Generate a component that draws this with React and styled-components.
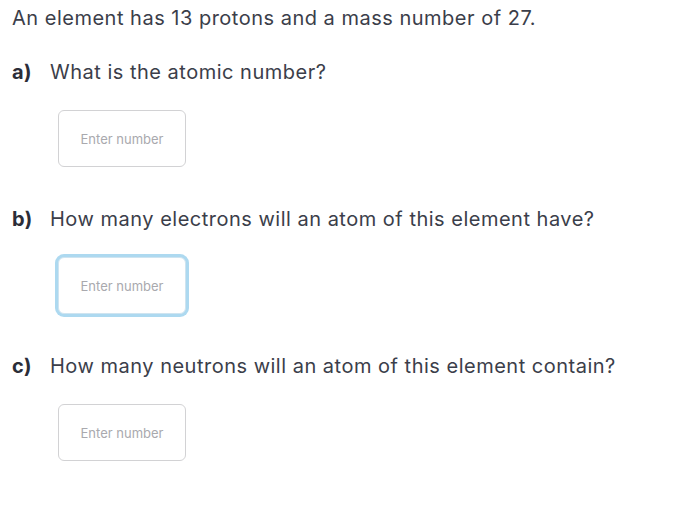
import React from "react";
import styled, { createGlobalStyle } from "styled-components";

const Global = createGlobalStyle`
  html, body { margin: 0; padding: 0; background: #ffffff; }
  body { font-family: Inter, "Noto Sans", sans-serif; -webkit-font-smoothing: antialiased; }
`;

const Page = styled.main`
  padding: 4px 12px 0 12px;
  display: flex;
  flex-direction: column;
`;

const Intro = styled.p`
  margin: 0 0 26px 0;
  font-size: 20px;
  line-height: 28px;
  color: #3b3e4a;
  letter-spacing: 0.5px;
`;

const Section = styled.section`
  display: flex;
  flex-direction: column;
  gap: 24px;
  margin-bottom: 38px;
`;

const Question = styled.div`
  display: flex;
  align-items: baseline;
  font-size: 20px;
  line-height: 28px;
  color: #3b3e4a;
  letter-spacing: 0.5px;
`;

const Label = styled.span`
  width: 38px;
  flex: none;
  font-weight: 700;
  color: #2b2d38;
`;

const AnswerRow = styled.div`
  display: flex;
  padding-left: 46px;
`;

const NumberInput = styled.input`
  box-sizing: border-box;
  width: 128px;
  height: 57px;
  border-radius: 6px;
  border: 1.5px solid ${(p) => (p.$focused ? "#cfe4f0" : "#d2d2d4")};
  box-shadow: ${(p) => (p.$focused ? "0 0 0 3px #add9f0" : "none")};
  background: #ffffff;
  outline: none;
  text-align: center;
  font-family: Inter, "Noto Sans", sans-serif;
  font-size: 13px;
  color: #3b3e4a;
  &::placeholder { color: #a9a9ae; }
`;

const parts = [
  { label: "a)", text: "What is the atomic number?" },
  { label: "b)", text: "How many electrons will an atom of this element have?", focused: true },
  { label: "c)", text: "How many neutrons will an atom of this element contain?" },
];

export default function App() {
  return (
    <>
      <Global />
      <Page>
        <Intro>An element has 13 protons and a mass number of 27.</Intro>
        {parts.map((p) => (
          <Section key={p.label}>
            <Question>
              <Label>{p.label}</Label>
              <span>{p.text}</span>
            </Question>
            <AnswerRow>
              <NumberInput type="text" placeholder="Enter number" $focused={p.focused} />
            </AnswerRow>
          </Section>
        ))}
      </Page>
    </>
  );
}
